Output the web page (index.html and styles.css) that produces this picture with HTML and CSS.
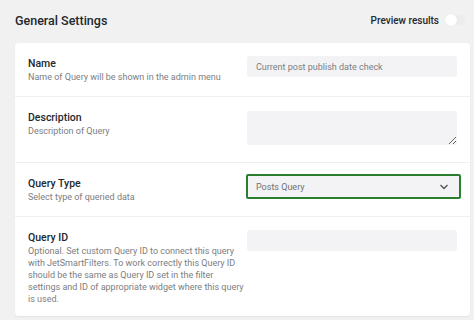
FILE: index.html
```html
<html lang="en">
  <head>
    <meta charset="UTF-8" />
    <meta name="viewport" content="width=device-width, initial-scale=1.0" />
    <title>General Settings</title>

    <link rel="stylesheet" href="styles.css">
  </head>
  <body>
    <div class="header">
      <h2 class="title">General Settings</h2>
      <div class="preview">
        <span>Preview results</span>
        <span class="toggle"><span class="knob"></span></span>
      </div>
    </div>

    <div class="card">
      <div class="row">
        <div class="info">
          <div class="label">Name</div>
          <div class="desc">Name of Query will be shown in the admin menu</div>
        </div>
        <div class="control">
          <input class="field" type="text" value="Current post publish date check" />
        </div>
      </div>

      <div class="row row-desc">
        <div class="info">
          <div class="label">Description</div>
          <div class="desc">Description of Query</div>
        </div>
        <div class="control">
          <textarea class="field area"></textarea>
        </div>
      </div>

      <div class="row">
        <div class="info">
          <div class="label">Query Type</div>
          <div class="desc">Select type of queried data</div>
        </div>
        <div class="control">
          <div class="select">
            <span>Posts Query</span>
            <svg width="10" height="6" viewBox="0 0 10 6">
              <path d="M1.5 1 L5 4.5 L8.5 1" fill="none" stroke="#555" stroke-width="1.4" />
            </svg>
          </div>
        </div>
      </div>

      <div class="row">
        <div class="info">
          <div class="label">Query ID</div>
          <div class="desc">Optional. Set custom Query ID to connect this query with JetSmartFilters. To work correctly this Query ID should be the same as Query ID set in the filter settings and ID of appropriate widget where this query is used.</div>
        </div>
        <div class="control">
          <input class="field" type="text" />
        </div>
      </div>
    </div>
  </body>
</html>
```

FILE: styles.css
```css
*,
*::after,
*::before {
  margin: 0;
  padding: 0;
  box-sizing: border-box;
}

body {
  width: 100vw;
  height: 100vh;
  background: #f1f1f1;
  font-family: Roboto, "Liberation Sans", sans-serif;
  color: #23282d;
  padding: 0 4px 0 15px;
  overflow: hidden;
}

.header {
  height: 43px;
  display: flex;
  align-items: center;
  justify-content: space-between;
  padding: 0 5px 3px 0;
}

.title {
  font-size: 12.5px;
  font-weight: 500;
}

.preview {
  display: flex;
  align-items: center;
  gap: 7px;
  font-size: 10px;
  font-weight: 500;
}

.toggle {
  width: 19px;
  height: 10px;
  border-radius: 5px;
  background: #ececec;
  position: relative;
}

.knob {
  position: absolute;
  left: -1px;
  top: -1px;
  width: 12px;
  height: 12px;
  border-radius: 50%;
  background: #fff;
  box-shadow: 0 0 1px rgba(0, 0, 0, 0.1);
}

.card {
  background: #fff;
  border-radius: 4px;
  box-shadow: 0 1px 2px rgba(0, 0, 0, 0.06);
}

.row {
  display: grid;
  grid-template-columns: 1fr 210px;
  gap: 0;
  padding: 13px 13px 13px 13px;
  border-bottom: 1px solid #f0f0f0;
  min-height: 54px;
}

.row:last-of-type {
  border-bottom: none;
  padding-bottom: 11px;
}

.row-desc {
  min-height: 66px;
}

.info {
  padding: 1px 6px 0 0;
}

.label {
  font-size: 10.5px;
  font-weight: 500;
  line-height: 14px;
}

.desc {
  font-size: 9px;
  line-height: 12px;
  color: #7b7e81;
  margin-right: -6px;
}

.field {
  display: block;
  width: 100%;
  height: 21px;
  border: none;
  outline: none;
  border-radius: 3px;
  background: #f3f3f5;
  font-family: Roboto, "Liberation Sans", sans-serif;
  font-size: 9px;
  color: #7b7e81;
  padding: 0 9px;
}

.area {
  height: 34px;
  margin-top: 1px;
  resize: vertical;
}

.select {
  margin: -2px -4px 0 -1px;
  height: 25px;
  border: 2px solid #2a7f2e;
  border-radius: 2px;
  background: #f3f3f5;
  display: flex;
  align-items: center;
  justify-content: space-between;
  padding: 0 10px 0 8px;
  font-size: 9px;
  color: #6e7174;
}
```
